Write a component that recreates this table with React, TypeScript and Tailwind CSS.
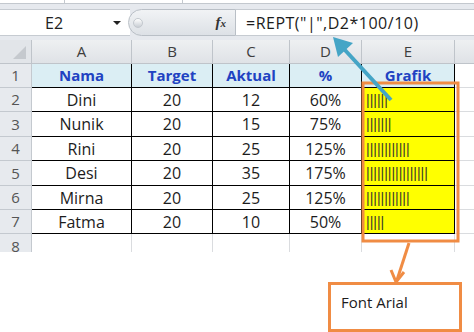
import React from "react";

const cols = "grid-cols-[32px_100px_81px_77px_72px_93px_19px]";

const data: [string, number, number, string, number][] = [
  ["Dini", 20, 12, "60%", 6],
  ["Nunik", 20, 15, "75%", 7],
  ["Rini", 20, 25, "125%", 12],
  ["Desi", 20, 35, "175%", 17],
  ["Mirna", 20, 25, "125%", 12],
  ["Fatma", 20, 10, "50%", 5],
];

const rowHeights = ["h-[24px]", "h-[25px]", "h-[24px]", "h-[25px]", "h-[24px]", "h-[24px]"];

function RowNum({ n, h }: { n: number; h: string }) {
  return (
    <div
      className={`${h} flex items-center justify-center bg-[#e7eaee] border-r border-b border-[#c4c9cf] text-[15px] text-[#555]`}
    >
      {n}
    </div>
  );
}

function Cell({ children, h }: { children?: React.ReactNode; h: string }) {
  return (
    <div className={`${h} flex items-center justify-center border-r border-b border-black text-[16px] text-[#1c1c1c]`}>
      {children}
    </div>
  );
}

function Head({ children }: { children?: React.ReactNode }) {
  return (
    <div className="h-[24px] flex items-center justify-center bg-[#dbeef4] border-r border-b border-black text-[15px] font-bold text-[#2142c2]">
      {children}
    </div>
  );
}

function ColHead({ children }: { children?: React.ReactNode }) {
  return (
    <div className="h-[24px] flex items-center justify-center bg-gradient-to-b from-[#eef0f2] to-[#dfe2e6] border-r border-b border-[#bfc4ca] text-[15px] text-[#3d3d3d]">
      {children}
    </div>
  );
}

export default function App() {
  return (
    <div
      className="relative w-[474px] h-[332px] overflow-hidden bg-white"
      style={{ fontFamily: "'Open Sans', 'Liberation Sans', sans-serif" }}
    >
      {/* ribbon remains */}
      <div className="h-[4px] flex bg-white border-b border-[#c3c8ce]">
        <div className="w-[65px] border-r border-[#c3c8ce]" />
        <div className="w-[118px] border-r border-[#c3c8ce]" />
      </div>
      <div className="h-[5px] bg-[#e6e9ee]" />

      {/* formula bar */}
      <div className="h-[27px] flex bg-[#e6e9ee]">
        <div className="w-[130px] bg-white border-y border-[#c6cbd1] flex items-center">
          <span className="pl-[45px] text-[16px] text-[#222]">E2</span>
          <span className="ml-auto mr-[9px] w-0 h-0 border-l-[4px] border-r-[4px] border-t-[4px] border-l-transparent border-r-transparent border-t-[#222]" />
        </div>
        <div className="w-[108px] -ml-[2px] rounded-l-full bg-gradient-to-b from-[#f1f3f5] to-[#dde1e6] border border-[#b9bfc6] flex items-center">
          <span className="ml-[4px] w-[10px] h-[10px] rounded-full bg-gradient-to-b from-[#ffffff] to-[#c9ced4] border border-[#c3c8ce]" />
          <span className="ml-auto mr-[9px] italic font-bold text-[#333] text-[15px]" style={{ fontFamily: "'Liberation Serif', serif" }}>
            f<span className="text-[11px]">x</span>
          </span>
        </div>
        <div className="flex-1 bg-white border-y border-[#c6cbd1] flex items-center pl-[10px] text-[16px] tracking-[0.5px] text-[#1c1c1c]">
          =REPT("|",D2*100/10)
        </div>
      </div>
      <div className="h-[4px] bg-[#e6e9ee]" />

      {/* sheet grid */}
      <div className={`grid ${cols}`}>
        <div className="h-[24px] relative bg-[#e2e5e9] border-r border-b border-[#bfc4ca]">
          <svg className="absolute right-[5px] bottom-[4px]" width="13" height="13" viewBox="0 0 13 13">
            <polygon points="13,0 13,13 0,13" fill="#c5c9ce" />
          </svg>
        </div>
        <ColHead>A</ColHead>
        <ColHead>B</ColHead>
        <ColHead>C</ColHead>
        <ColHead>D</ColHead>
        <ColHead>E</ColHead>
        <div className="h-[24px] bg-gradient-to-b from-[#eef0f2] to-[#dfe2e6] border-b border-[#bfc4ca]" />

        <RowNum n={1} h="h-[24px]" />
        <Head>Nama</Head>
        <Head>Target</Head>
        <Head>Aktual</Head>
        <Head>%</Head>
        <Head>Grafik</Head>
        <div className="h-[24px] border-b border-[#dadcdf]" />

        {data.map(([nama, target, aktual, pct, bars], i) => (
          <React.Fragment key={nama}>
            <RowNum n={i + 2} h={rowHeights[i]} />
            <Cell h={rowHeights[i]}>{nama}</Cell>
            <Cell h={rowHeights[i]}>{target}</Cell>
            <Cell h={rowHeights[i]}>{aktual}</Cell>
            <Cell h={rowHeights[i]}>{pct}</Cell>
            <div
              className={`${rowHeights[i]} flex items-center bg-[#ffff00] border-r border-b border-black pl-[4px] text-[14px] leading-none text-[#3b3b2e]`}
              style={{ fontFamily: "'Liberation Sans', Arial, sans-serif" }}
            >
              {"|".repeat(bars)}
            </div>
            <div className={`${rowHeights[i]} border-b border-[#dadcdf]`} />
          </React.Fragment>
        ))}
      </div>

      {/* row 8, cut off */}
      <div className={`grid ${cols} h-[18px] overflow-hidden`}>
        <div className="h-[24px] flex items-center justify-center bg-[#e7eaee] border-r border-[#c4c9cf] text-[15px] text-[#555]">
          8
        </div>
        <div className="border-r border-[#dadcdf]" />
        <div className="border-r border-[#dadcdf]" />
        <div className="border-r border-[#dadcdf]" />
        <div className="border-r border-[#dadcdf]" />
        <div className="border-r border-[#dadcdf]" />
        <div />
      </div>

      {/* annotations */}
      <svg className="absolute left-0 top-0 pointer-events-none" width="474" height="332">
        <rect x="363" y="83" width="95" height="158" fill="none" stroke="#f08c44" strokeWidth="3" />
        <line x1="409" y1="243" x2="397" y2="280" stroke="#f08c44" strokeWidth="3" />
        <polyline points="391,270 396,282 404,272" fill="none" stroke="#f08c44" strokeWidth="3" strokeLinejoin="round" />
        <line x1="391" y1="100" x2="344" y2="49" stroke="#45a5c6" strokeWidth="4" />
        <polygon points="333,37 353,43 338,57" fill="#45a5c6" />
      </svg>

      <div className="absolute left-[328px] top-[282px] w-[134px] h-[50px] bg-white border-[3px] border-[#f08c44] pl-[10px] pt-[6px] text-[15px] text-[#1c1c1c]">
        Font Arial
      </div>
    </div>
  );
}
